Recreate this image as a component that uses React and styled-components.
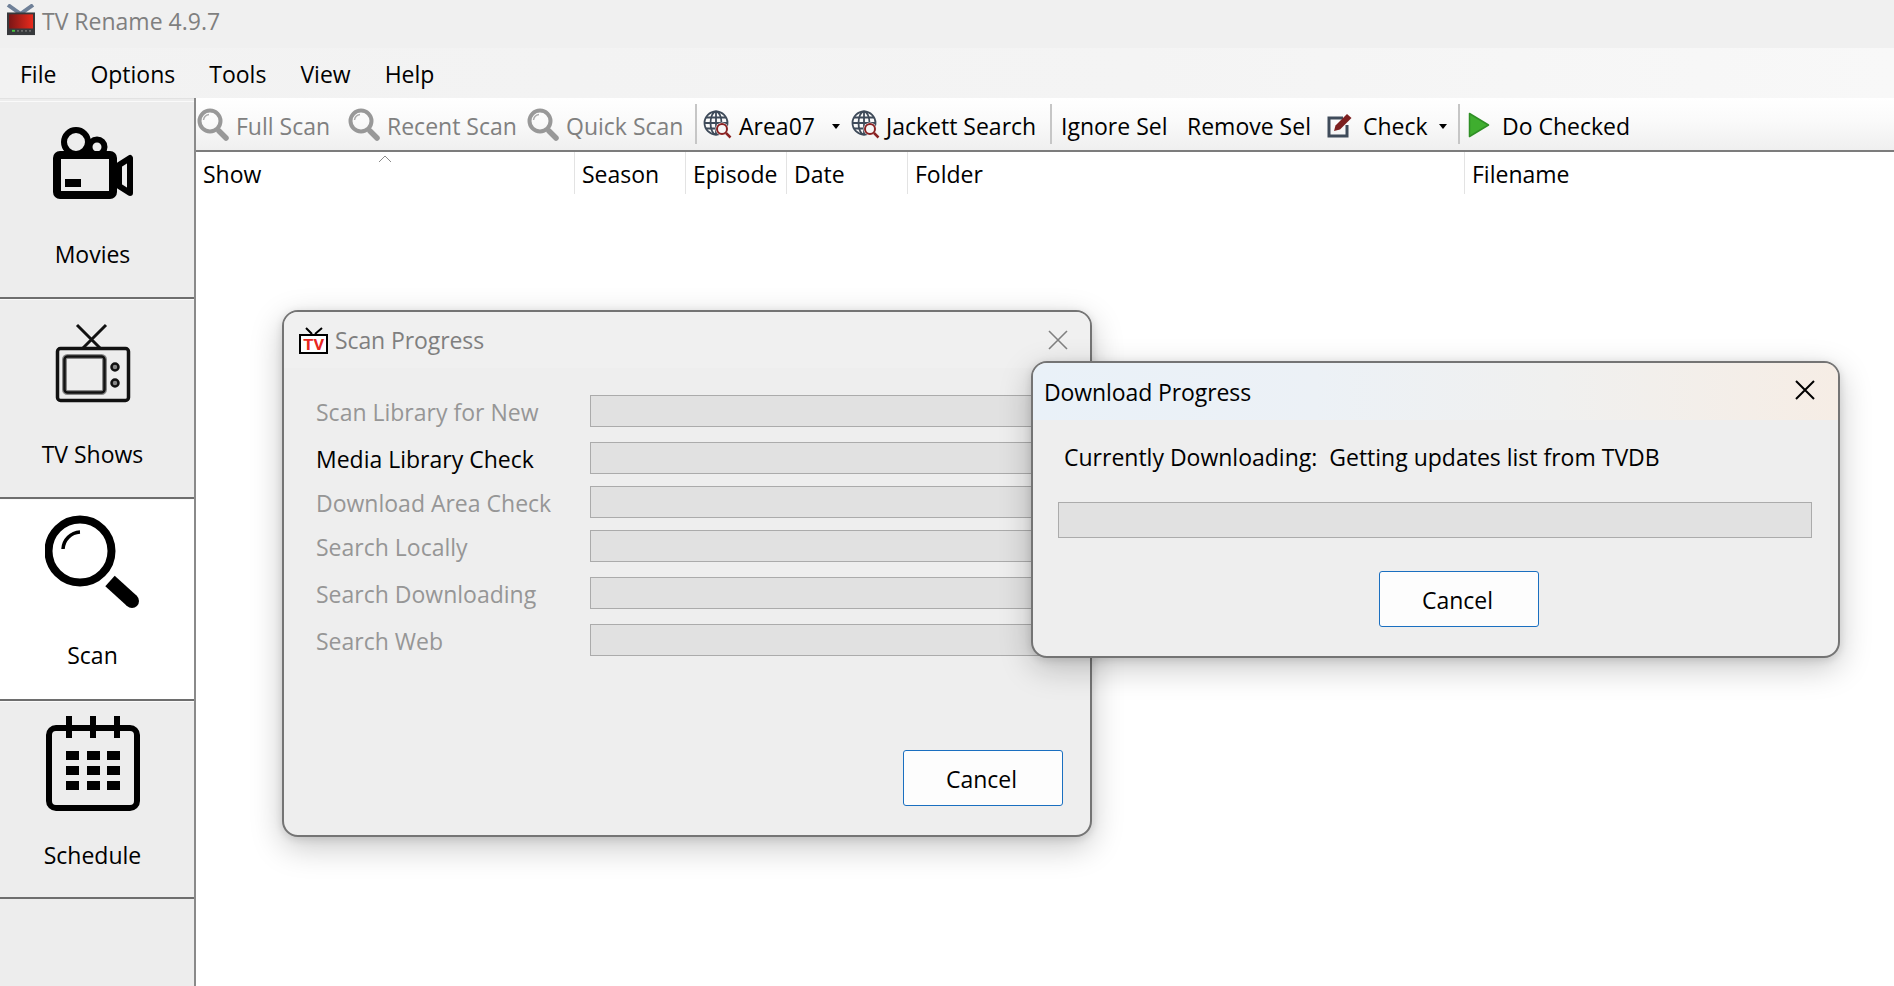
import React from 'react'
import styled, { createGlobalStyle } from 'styled-components'

const GlobalStyle = createGlobalStyle`
  html, body {
    margin: 0;
    padding: 0;
    width: 1894px;
    height: 986px;
    overflow: hidden;
    background: #fff;
    font-family: "Open Sans", "Noto Sans", sans-serif;
    font-size: 23px;
    color: #000;
  }
  * { box-sizing: border-box; }
`

const Window = styled.div`
  position: relative;
  width: 1894px;
  height: 986px;
  display: flex;
  flex-direction: column;
  overflow: hidden;
`

const TitleBar = styled.div`
  height: 48px;
  background: #f0f0f0;
  display: flex;
  align-items: center;
  padding-left: 6px;
  gap: 6px;
  color: #7f7f7f;
  span { padding-bottom: 7px; }
  svg { margin-bottom: 8px; }
`

const MenuBar = styled.div`
  height: 50px;
  padding-top: 2px;
  background: linear-gradient(90deg, #f2f2f2 0%, #f4f4f4 60%, #f8f8f8 100%);
  display: flex;
  align-items: center;
  padding-left: 20px;
  gap: 34px;
`

const Main = styled.div`
  flex: 1;
  display: flex;
  min-height: 0;
`

const Sidebar = styled.div`
  width: 194px;
  background: #ededed;
  padding-top: 2px;
  display: flex;
  flex-direction: column;
  border-top: 1px solid #e2e2e2;
`

const Tab = styled.div`
  height: ${p => p.$height}px;
  padding: ${p => p.$top}px 9px ${p => p.$bottom}px 0;
  display: flex;
  flex-direction: column;
  align-items: center;
  background: ${p => (p.$active ? '#fff' : '#ededed')};
  border-bottom: 2px solid #6e6e6e;
  border-top: 1px solid #fafafa;
  svg { display: block; flex: none; }
`

const TabLabel = styled.div`
  margin-top: auto;
  line-height: 28px;
`

const Content = styled.div`
  flex: 1;
  display: flex;
  flex-direction: column;
  border-left: 2px solid #8a8a8a;
  min-width: 0;
`

const Toolbar = styled.div`
  height: 54px;
  padding: 4px 0 0 1px;
  display: flex;
  align-items: center;
  background: linear-gradient(180deg, #ffffff 0%, #fafafa 45%, #efefef 100%);
  border-bottom: 2px solid #7c7c7c;
`

const ToolItem = styled.div`
  width: ${p => p.$width}px;
  flex: none;
  display: flex;
  align-items: center;
  gap: ${p => p.$gap ?? 6}px;
  color: ${p => (p.$disabled ? '#808080' : '#000')};
  white-space: nowrap;
  svg { flex: none; margin-top: -3px; }
`

const ToolSeparator = styled.div`
  width: 2px;
  height: 40px;
  margin: -4px ${p => p.$right ?? 6}px 0 0;
  background: #c6c6c6;
  flex: none;
`

const Caret = styled.span`
  width: 0;
  height: 0;
  margin-left: ${p => p.$left}px;
  border-left: 4.5px solid transparent;
  border-right: 4.5px solid transparent;
  border-top: 5px solid #000;
`

const TableHeader = styled.div`
  display: grid;
  grid-template-columns: 378px 111px 101px 121px 557px 1fr;
  height: 42px;
  background: #fff;
`

const HeaderCell = styled.div`
  position: relative;
  display: flex;
  align-items: center;
  padding: 2px 0 0 7px;
  border-left: ${p => (p.$first ? 'none' : '1px solid #e3e3e3')};
`

const SortArrow = styled.svg`
  position: absolute;
  left: 182px;
  top: 3px;
`

const TableBody = styled.div`
  flex: 1;
  background: #fff;
`

const Dialog = styled.div`
  position: absolute;
  left: ${p => p.$left}px;
  top: ${p => p.$top}px;
  width: ${p => p.$width}px;
  height: ${p => p.$height}px;
  z-index: ${p => p.$z};
  display: flex;
  flex-direction: column;
  background: #eeeeee;
  border: 2px solid #747474;
  border-radius: 16px;
  box-shadow: 0 10px 32px rgba(0, 0, 0, 0.22), 0 2px 8px rgba(0, 0, 0, 0.12);
  overflow: hidden;
`

const DialogTitle = styled.div`
  height: ${p => p.$height}px;
  flex: none;
  display: flex;
  align-items: center;
  justify-content: space-between;
  padding: 0 ${p => p.$rightPad}px 0 ${p => p.$leftPad}px;
  background: ${p => p.$bg};
  color: ${p => p.$color};
  letter-spacing: -0.1px;
  svg { margin-bottom: ${p => p.$iconLift ?? 0}px; }
`

const TitleLeft = styled.div`
  display: flex;
  align-items: center;
  gap: 7px;
`

const ScanBody = styled.div`
  flex: 1;
  padding: 27px 0 29px 32px;
  display: flex;
  flex-direction: column;
`

const ScanRow = styled.div`
  display: flex;
  align-items: center;
  height: 32px;
  margin-bottom: ${p => p.$after}px;
`

const ScanLabel = styled.div`
  width: 274px;
  flex: none;
  padding-top: 2px;
  color: ${p => (p.$active ? '#000' : '#969696')};
`

const ProgressBar = styled.div`
  flex: ${p => (p.$fill ? 1 : 'none')};
  width: ${p => (p.$fill ? 'auto' : '100%')};
  height: ${p => p.$height}px;
  background: #e1e1e1;
  border: 1px solid #ababab;
`

const ButtonRow = styled.div`
  margin-top: auto;
  display: flex;
  justify-content: flex-end;
  padding-right: ${p => p.$right}px;
`

const Button = styled.button`
  width: 160px;
  height: 56px;
  background: #fdfdfd;
  border: 1px solid #1a6fc0;
  border-radius: 3px;
  font: inherit;
  color: #000;
  padding: 2px 3px 0 0;
`

const DownloadBody = styled.div`
  flex: 1;
  padding: 15px 26px 29px 25px;
  display: flex;
  flex-direction: column;
`

const DownloadText = styled.div`
  padding-left: 6px;
  line-height: 44px;
  height: 67px;
  white-space: pre;
`

const AppIcon = () => (
  <svg width="30" height="32" viewBox="0 0 30 34" preserveAspectRatio="none">
    <defs>
      <linearGradient id="tvred" x1="0" x2="1" y1="0" y2="0">
        <stop offset="0" stopColor="#7a1616" />
        <stop offset="1" stopColor="#ea2a1c" />
      </linearGradient>
    </defs>
    <path d="M2 1 L14 10 M27 1 L15 10" stroke="#6f8098" strokeWidth="4" fill="none" />
    <rect x="1" y="9" width="28" height="24" fill="#37393c" />
    <rect x="3" y="11" width="24" height="15" fill="url(#tvred)" />
    <rect x="6" y="27.5" width="3" height="2" fill="#47c23e" />
    <path d="M11 28.5 H26" stroke="#6a6a6a" strokeWidth="2" strokeDasharray="2 2" />
  </svg>
)

const SmallTvIcon = () => (
  <svg width="29" height="27" viewBox="0 0 29 27">
    <path d="M7 1 L13 7 M23 1 L16 7" stroke="#000" strokeWidth="2" fill="none" />
    <rect x="1" y="8" width="27" height="18" fill="#fff" stroke="#000" strokeWidth="2" />
    <text x="14.5" y="22.5" textAnchor="middle" fontFamily="Liberation Mono, monospace" fontSize="16" fontWeight="700" fill="#e8281f" textLength="21" lengthAdjust="spacingAndGlyphs">TV</text>
  </svg>
)

const MovieIcon = () => (
  <svg width="80" height="72" viewBox="0 0 80 72">
    <rect x="4" y="28" width="56" height="40" rx="3" fill="none" stroke="#000" strokeWidth="8" />
    <circle cx="23" cy="15" r="12" fill="none" stroke="#000" strokeWidth="6" />
    <circle cx="44" cy="20" r="7.5" fill="none" stroke="#000" strokeWidth="6" />
    <path d="M66 38 L77 31 V66 L66 59 Z" fill="none" stroke="#000" strokeWidth="6" strokeLinejoin="round" />
    <rect x="12" y="52" width="16" height="8" fill="#000" />
  </svg>
)

const TvIcon = () => (
  <svg width="76" height="80" viewBox="0 0 76 80">
    <path d="M22 2 L45 25 M51 2 L28 25" stroke="#111" strokeWidth="3" fill="none" />
    <rect x="2.5" y="25.5" width="71" height="52" rx="3" fill="none" stroke="#111" strokeWidth="3.5" />
    <rect x="9.5" y="33.5" width="40" height="36" rx="3" fill="none" stroke="#888" strokeWidth="5" />
    <rect x="9.5" y="33.5" width="40" height="36" rx="3" fill="none" stroke="#111" strokeWidth="2.5" />
    <circle cx="60" cy="44" r="3.5" fill="#888" stroke="#111" strokeWidth="2.5" />
    <circle cx="60" cy="60" r="3.5" fill="#888" stroke="#111" strokeWidth="2.5" />
  </svg>
)

const ScanIcon = () => (
  <svg width="96" height="96" viewBox="0 0 96 96">
    <circle cx="35" cy="36" r="31.5" fill="none" stroke="#000" strokeWidth="8" />
    <path d="M18 34 A 18 18 0 0 1 35 17" fill="none" stroke="#000" strokeWidth="3.5" />
    <path d="M65 66 L87 86" stroke="#000" strokeWidth="14" />
    <circle cx="87" cy="86" r="7" fill="#000" />
  </svg>
)

const ScheduleIcon = () => (
  <svg width="96" height="96" viewBox="0 0 96 96">
    <rect x="4" y="13" width="88" height="80" rx="7" fill="#ededed" stroke="#000" strokeWidth="6" />
    <path d="M24 1 V23 M48 1 V23 M72 1 V23" stroke="#000" strokeWidth="6" />
    {[36, 51, 66].map(y =>
      [21, 42, 62].map(x => <rect key={`${x}-${y}`} x={x} y={y} width="13" height="9" fill="#000" />)
    )}
  </svg>
)

const MagnifierIcon = () => (
  <svg width="33" height="34" viewBox="0 0 33 34">
    <circle cx="13" cy="13" r="10.5" fill="none" stroke="#989898" strokeWidth="4" />
    <path d="M6.5 12 A 6.5 6.5 0 0 1 12 6.5" fill="none" stroke="#aaa" strokeWidth="1.5" />
    <path d="M22 23 L29 30" stroke="#989898" strokeWidth="5.5" strokeLinecap="round" />
  </svg>
)

const GlobeIcon = () => (
  <svg width="29" height="29" viewBox="0 0 29 29">
    <g fill="none" stroke="#3f4b5a" strokeWidth="1.8">
      <circle cx="13" cy="13" r="11.5" />
      <ellipse cx="13" cy="13" rx="5.5" ry="11.5" />
      <path d="M13 1.5 V24.5 M1.5 13 H24.5 M3 7.5 H23 M3 18.5 H23" />
    </g>
    <circle cx="19" cy="19" r="6.5" fill="#f6f6f6" />
    <circle cx="19" cy="19" r="5" fill="#f6f6f6" stroke="#8a2222" strokeWidth="2" />
    <path d="M23 23 L27.5 27.5" stroke="#8a2222" strokeWidth="2.5" />
  </svg>
)

const CheckIcon = () => (
  <svg width="26" height="26" viewBox="0 0 26 26">
    <path d="M16 6 H2 V24 H20 V13" fill="none" stroke="#3f4b5a" strokeWidth="3" />
    <path d="M7 19 L8.5 13.5 L20 2 L24.5 6 L13 17.5 Z" fill="#7d1f1f" />
  </svg>
)

const PlayIcon = () => (
  <svg width="22" height="26" viewBox="0 0 22 26">
    <path d="M1.5 1.5 L20.5 13 L1.5 24.5 Z" fill="#3fae2f" stroke="#2f8f26" strokeWidth="1.5" strokeLinejoin="round" />
  </svg>
)

const CloseIcon = ({ color, width }) => (
  <svg width="20" height="20" viewBox="0 0 20 20">
    <path d="M1 1 L19 19 M19 1 L1 19" stroke={color} strokeWidth={width} fill="none" />
  </svg>
)

const tabs = [
  { label: 'Movies', icon: <MovieIcon />, height: 198, top: 25, bottom: 29 },
  { label: 'TV Shows', icon: <TvIcon />, height: 200, top: 23, bottom: 29 },
  { label: 'Scan', icon: <ScanIcon />, height: 202, top: 15, bottom: 30, active: true },
  { label: 'Schedule', icon: <ScheduleIcon />, height: 198, top: 13, bottom: 28 },
]

const columns = ['Show', 'Season', 'Episode', 'Date', 'Folder', 'Filename']

const scanRows = [
  { label: 'Scan Library for New', after: 15 },
  { label: 'Media Library Check', after: 12, active: true },
  { label: 'Download Area Check', after: 12 },
  { label: 'Search Locally', after: 15 },
  { label: 'Search Downloading', after: 15 },
  { label: 'Search Web', after: 0 },
]

export default function App() {
  return (
    <Window>
      <GlobalStyle />
      <TitleBar>
        <AppIcon />
        <span>TV Rename 4.9.7</span>
      </TitleBar>
      <MenuBar>
        {['File', 'Options', 'Tools', 'View', 'Help'].map(m => <span key={m}>{m}</span>)}
      </MenuBar>
      <Main>
        <Sidebar>
          {tabs.map(t => (
            <Tab key={t.label} $height={t.height} $top={t.top} $bottom={t.bottom} $active={t.active}>
              {t.icon}
              <TabLabel>{t.label}</TabLabel>
            </Tab>
          ))}
        </Sidebar>
        <Content>
          <Toolbar>
            <ToolItem $width={151} $disabled><MagnifierIcon />Full Scan</ToolItem>
            <ToolItem $width={179} $disabled><MagnifierIcon />Recent Scan</ToolItem>
            <ToolItem $width={168} $disabled><MagnifierIcon />Quick Scan</ToolItem>
            <ToolSeparator />
            <ToolItem $width={148} $gap={7}><GlobeIcon />Area07<Caret $left={10} /></ToolItem>
            <ToolItem $width={199} $gap={6}><GlobeIcon />Jackett Search</ToolItem>
            <ToolSeparator $right={9} />
            <ToolItem $width={126}>Ignore Sel</ToolItem>
            <ToolItem $width={140}>Remove Sel</ToolItem>
            <ToolItem $width={131} $gap={10}><CheckIcon />Check<Caret $left={1} /></ToolItem>
            <ToolSeparator $right={8} />
            <ToolItem $width={170} $gap={12}><PlayIcon />Do Checked</ToolItem>
          </Toolbar>
          <TableHeader>
            {columns.map((c, i) => (
              <HeaderCell key={c} $first={i === 0}>
                {c}
                {i === 0 && (
                  <SortArrow width="14" height="8" viewBox="0 0 14 8">
                    <path d="M1 7 L7 1 L13 7" fill="none" stroke="#8a8a8a" strokeWidth="1" />
                  </SortArrow>
                )}
              </HeaderCell>
            ))}
          </TableHeader>
          <TableBody />
        </Content>
      </Main>

      <Dialog $left={282} $top={310} $width={810} $height={527} $z={1}>
        <DialogTitle $height={56} $leftPad={15} $rightPad={22} $bg="#f0f0f0" $color="#7f7f7f">
          <TitleLeft><SmallTvIcon />Scan Progress</TitleLeft>
          <CloseIcon color="#808080" width="1.6" />
        </DialogTitle>
        <ScanBody>
          {scanRows.map(r => (
            <ScanRow key={r.label} $after={r.after}>
              <ScanLabel $active={r.active}>{r.label}</ScanLabel>
              <ProgressBar $fill $height={32} />
            </ScanRow>
          ))}
          <ButtonRow $right={27}>
            <Button>Cancel</Button>
          </ButtonRow>
        </ScanBody>
      </Dialog>

      <Dialog $left={1031} $top={361} $width={809} $height={297} $z={2}>
        <DialogTitle
          $height={57}
          $leftPad={11}
          $rightPad={23}
          $iconLift={3}
          $bg="linear-gradient(90deg, #e9f1f8 0%, #ecf1f6 35%, #f0f0ef 65%, #f6ede5 100%)"
          $color="#000"
        >
          <span>Download Progress</span>
          <CloseIcon color="#000" width="2" />
        </DialogTitle>
        <DownloadBody>
          <DownloadText>Currently Downloading:  Getting updates list from TVDB</DownloadText>
          <ProgressBar $height={36} />
          <ButtonRow $right={273}>
            <Button>Cancel</Button>
          </ButtonRow>
        </DownloadBody>
      </Dialog>
    </Window>
  )
}
